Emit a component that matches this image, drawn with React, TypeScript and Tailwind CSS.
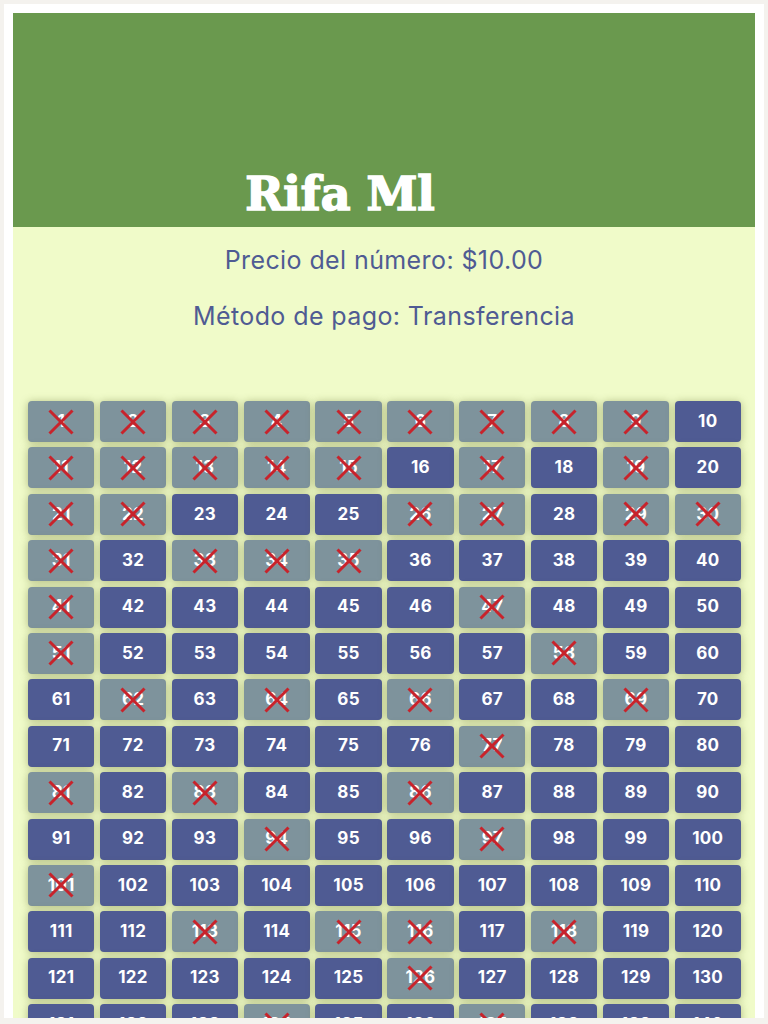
import React from "react";

const taken = new Set<number>([
  1, 2, 3, 4, 5, 6, 7, 8, 9,
  11, 12, 13, 14, 15, 17, 19,
  21, 22, 26, 27, 29, 30,
  31, 33, 34, 35,
  41, 47,
  51, 58,
  62, 64, 66, 69,
  77,
  81, 83, 86,
  94, 97,
  101,
  113, 115, 116, 118,
  126,
  134, 137,
]);

function Cross() {
  return (
    <svg
      className="absolute left-1/2 top-1/2 -translate-x-1/2 -translate-y-1/2"
      width="26"
      height="26"
      viewBox="0 0 26 26"
    >
      <line x1="1.5" y1="1.5" x2="24.5" y2="24.5" stroke="#c8232b" strokeWidth="3" />
      <line x1="24.5" y1="1.5" x2="1.5" y2="24.5" stroke="#c8232b" strokeWidth="3" />
    </svg>
  );
}

export default function App() {
  const nums = Array.from({ length: 150 }, (_, i) => i + 1);
  return (
    <div className="h-screen overflow-hidden bg-[#f4f2ee] px-1 pt-1 pb-[6px]">
      <div className="h-full overflow-hidden bg-white px-[9px] pt-[9px]">
        <div className="h-full overflow-hidden bg-[#f0fbc9]">
          <div className="flex h-[214px] items-end justify-center bg-[#6a994e] pb-[10px] pr-[88px]">
            <h1
              className="text-[46px] font-black leading-none tracking-[0px] text-white [-webkit-text-stroke:1.6px_white]"
              style={{ fontFamily: '"DejaVu Serif", serif' }}
            >
              Rifa Ml
            </h1>
          </div>
          <div
            className="flex flex-col items-center text-[#4f5b93]"
            style={{ fontFamily: 'Inter, "Noto Sans", sans-serif' }}
          >
            <p className="mt-[19px] text-[25px] leading-[28px] tracking-[0.4px]">Precio del número: $10.00</p>
            <p className="mt-[28px] text-[25px] leading-[28px] tracking-[0.4px]">Método de pago: Transferencia</p>
          </div>
          <div
            className="mt-[71px] grid grid-cols-10 gap-x-[5.4px] gap-y-[5.4px] pl-[15px] pr-[14px]"
            style={{ fontFamily: 'Inter, "Noto Sans", sans-serif' }}
          >
            {nums.map((n) => {
              const t = taken.has(n);
              return (
                <div
                  key={n}
                  className={
                    "relative flex h-[41px] items-center justify-center rounded-[4px] text-[17px] font-bold tracking-[0.3px] text-white shadow-[0_1px_9px_rgba(80,90,20,0.4)] " +
                    (t ? "bg-[#7e939c]" : "bg-[#4f5b93]")
                  }
                >
                  {n}
                  {t && <Cross />}
                </div>
              );
            })}
          </div>
        </div>
      </div>
    </div>
  );
}
